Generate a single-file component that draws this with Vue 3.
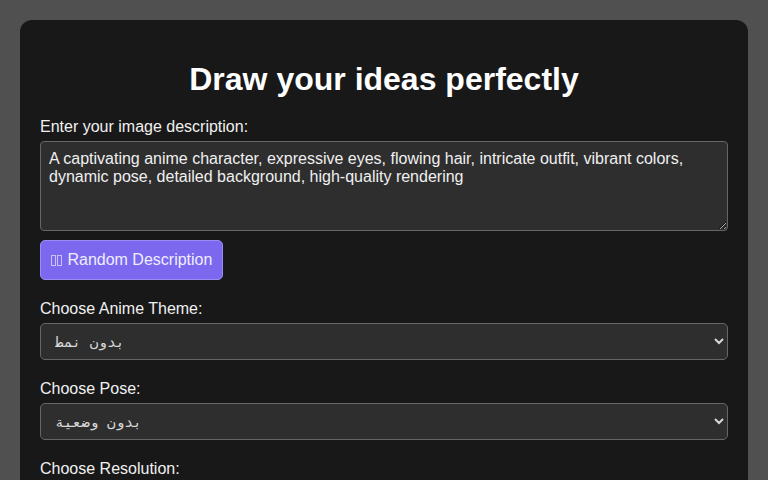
<template>
  <main class="card">
    <h1 class="title">Draw your ideas perfectly</h1>

    <label class="field-label" for="description">Enter your image description:</label>
    <textarea id="description" v-model="description" class="prompt"></textarea>
    <button class="random-btn" type="button" @click="pickRandom"><span class="missing-glyph"></span><span class="missing-glyph"></span> Random Description</button>

    <div v-for="field in fields" :key="field.id" class="field">
      <label class="field-label" :for="field.id">{{ field.label }}</label>
      <select :id="field.id" class="picker">
        <option v-for="opt in field.options" :key="opt">{{ opt }}</option>
      </select>
    </div>
  </main>
</template>

<script setup>
import { ref } from 'vue';

const samples = [
  'A captivating anime character, expressive eyes, flowing hair, intricate outfit, vibrant colors, dynamic pose, detailed background, high-quality rendering',
];
const description = ref(samples[0]);

const fields = [
  { id: 'theme', label: 'Choose Anime Theme:', options: ['بدون نمط'] },
  { id: 'pose', label: 'Choose Pose:', options: ['بدون وضعية'] },
  { id: 'resolution', label: 'Choose Resolution:', options: ['1024x1024'] },
];

function pickRandom() {
  description.value = samples[Math.floor(Math.random() * samples.length)];
}
</script>

<style>
body {
  background: #505050;
}
</style>

<style scoped>
.card {
  margin: 20px;
  padding: 20px;
  background: #181818;
  border-radius: 12px;
  font-family: "Liberation Sans", Arial, sans-serif;
  color: #f0f0f0;
}

.title {
  margin: 21px 0 20px;
  font-size: 32px;
  line-height: 37px;
  text-align: center;
  color: #fff;
}

.field-label {
  display: block;
  margin-bottom: 5px;
  font-size: 16px;
  line-height: 18px;
}

.prompt {
  display: block;
  box-sizing: border-box;
  width: 100%;
  height: 90px;
  padding: 8px;
  background: #2e2e2e;
  border: 1px solid #666;
  border-radius: 4px;
  color: #f0f0f0;
  font-family: inherit;
  font-size: 16px;
  line-height: 18px;
}

.random-btn {
  display: block;
  box-sizing: border-box;
  height: 40px;
  margin-top: 9px;
  padding: 0 10px;
  background: #7b68ee;
  border: 1px solid #9a8cf5;
  border-radius: 5px;
  color: #eeeeff;
  font-family: inherit;
  font-size: 16px;
  cursor: pointer;
}

/* the icon slot shows two empty boxes */
.missing-glyph {
  display: inline-block;
  box-sizing: border-box;
  width: 5px;
  height: 11px;
  margin-right: 1px;
  border: 1px solid #c9c2f8;
  vertical-align: -1px;
}

.field {
  margin-top: 20px;
}

.picker {
  display: block;
  box-sizing: border-box;
  width: 100%;
  height: 37px;
  padding: 8px 10px;
  background: #2e2e2e;
  border: 1px solid #666;
  border-radius: 5px;
  color: #d8d8d8;
  font-family: monospace;
  font-size: 14.4px;
}
</style>
